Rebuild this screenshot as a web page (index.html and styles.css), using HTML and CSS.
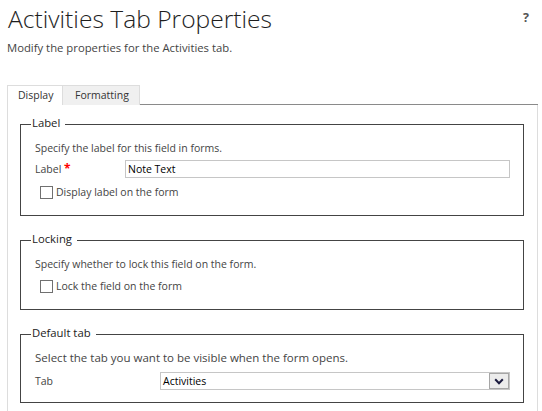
FILE: index.html
```html
<!DOCTYPE html>
<html lang="en">
<head>
<meta charset="utf-8">
<title>Activities Tab Properties</title>
<link rel="stylesheet" href="styles.css">
</head>
<body>
<div class="page">
  <header class="page-header">
    <div class="heading">
      <h1 class="title">Activities Tab Properties</h1>
      <p class="subtitle">Modify the properties for the Activities tab.</p>
    </div>
    <span class="help">?</span>
  </header>

  <div class="tabs">
    <div class="tab tab-active">Display</div>
    <div class="tab tab-inactive">Formatting</div>
    <div class="tab-fill"></div>
  </div>

  <div class="panel">
    <fieldset class="group">
      <legend class="group-title">Label</legend>
      <p class="desc">Specify the label for this field in forms.</p>
      <div class="field-row">
        <span class="field-label label-short">Label <span class="req">*</span></span>
        <div class="text-input">Note Text</div>
      </div>
      <div class="check-row">
        <span class="check-box"></span>
        <span class="check-text">Display label on the form</span>
      </div>
    </fieldset>

    <fieldset class="group">
      <legend class="group-title">Locking</legend>
      <p class="desc">Specify whether to lock this field on the form.</p>
      <div class="check-row check-row-tight">
        <span class="check-box"></span>
        <span class="check-text">Lock the field on the form</span>
      </div>
    </fieldset>

    <fieldset class="group group-last">
      <legend class="group-title">Default tab</legend>
      <p class="desc desc-large">Select the tab you want to be visible when the form opens.</p>
      <div class="field-row">
        <span class="field-label label-long">Tab</span>
        <div class="select">
          <span class="select-value">Activities</span>
          <span class="select-button">
            <svg width="10" height="7" viewBox="0 0 10 7"><polyline points="1.2,1.3 5,5.2 8.8,1.3" fill="none" stroke="#1b1b3f" stroke-width="2"/></svg>
          </span>
        </div>
      </div>
    </fieldset>
  </div>
</div>
</body>
</html>
```

FILE: styles.css
```css
* { box-sizing: border-box; }

html, body {
  margin: 0;
  padding: 0;
  background: #ffffff;
}

body {
  font-family: "Open Sans", "Noto Sans", "DejaVu Sans", sans-serif;
  font-size: 10.5px;
  color: #444444;
  width: 542px;
  height: 411px;
  overflow: hidden;
}

.page {
  padding: 0 4px 0 7px;
}

.page-header {
  display: flex;
  justify-content: space-between;
  align-items: flex-start;
  padding: 4px 9px 0 0;
}

.title {
  margin: 0 0 0 1px;
  font-size: 24.6px;
  font-weight: 300;
  line-height: 30px;
  color: #1e1e1e;
}

.subtitle {
  margin: 6px 0 0 0;
  font-size: 11.3px;
  line-height: 16px;
  color: #444444;
}

.help {
  margin-top: 6px;
  font-size: 12.5px;
  font-weight: 700;
  line-height: 16px;
  color: #555555;
}

.tabs {
  display: flex;
  margin-top: 29px;
  height: 20px;
}

.tab {
  height: 20px;
  border: 1px solid #dddddd;
  border-bottom: none;
  line-height: 19px;
  color: #333333;
}

.tab-active {
  width: 56px;
  padding-left: 10px;
  background: #ffffff;
}

.tab-inactive {
  width: 77px;
  padding-left: 12px;
  border-left: none;
  background: #f0f0f0;
}

.tab-fill {
  flex: 1;
  border-bottom: 1px solid #8a8a8a;
}

.panel {
  border-left: 1px solid #dddddd;
  border-right: 1px solid #dddddd;
  padding-top: 11px;
  height: 320px;
}

.group {
  margin: 0 13px 16px 12px;
  padding: 0 13px 14px 14px;
  border: 1px solid #444444;
  min-width: 0;
}

.group-last {
  margin-bottom: 0;
  padding-bottom: 12px;
}

.group-title {
  margin-left: -4px;
  padding: 0 5px 3px 1px;
  font-size: 11.3px;
  line-height: 14px;
  color: #222222;
}

.desc {
  margin: 7px 0 0 0;
  line-height: 16px;
  color: #444444;
}

.desc-large {
  margin-top: 6px;
  font-size: 11.5px;
  line-height: 17px;
}

.field-row {
  display: flex;
  align-items: center;
  margin-top: 4px;
  height: 18px;
}

.group-last .field-row {
  margin-top: 6px;
}

.field-label {
  flex: none;
  line-height: 18px;
  color: #444444;
}

.label-short { width: 90px; }
.label-long { width: 125px; }

.req {
  color: #ff0000;
  font-weight: 700;
  font-size: 12px;
}

.text-input {
  flex: 1;
  height: 18px;
  border: 1px solid #c6c6c6;
  padding-left: 2px;
  line-height: 16px;
  color: #000000;
}

.check-row {
  display: flex;
  align-items: center;
  margin-top: 5px;
  padding-left: 5px;
  height: 18px;
}

.check-row-tight {
  margin-top: 5px;
}

.check-box {
  flex: none;
  width: 13px;
  height: 13px;
  border: 1px solid #707070;
  background: #ffffff;
  margin-right: 3px;
}

.check-text {
  line-height: 18px;
  color: #444444;
}

.select {
  flex: 1;
  display: flex;
  align-items: stretch;
  height: 18px;
  border: 1px solid #c6c6c6;
}

.select-value {
  flex: 1;
  padding-left: 2px;
  line-height: 16px;
  color: #000000;
}

.select-button {
  flex: none;
  width: 20px;
  display: flex;
  align-items: center;
  justify-content: center;
  background: #ececec;
  border: 1px solid #a6a6a6;
}
```
